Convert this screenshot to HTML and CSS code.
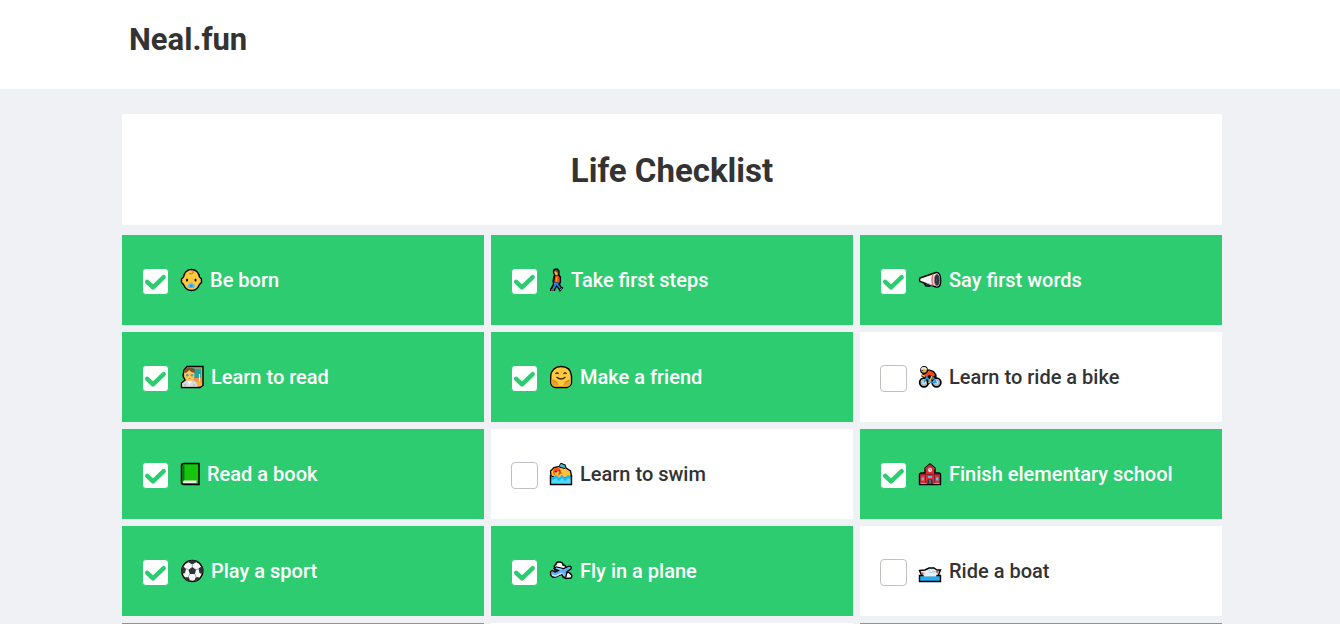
FILE: index.html
```
<!DOCTYPE html>
<html lang="en">
	<head>
		<meta charset="UTF-8">
		<title>Life Checklist</title>
		<link rel="stylesheet" href="styles.css">
	</head>
	<body>
		<header class="header">
			<div class="wrap">
				<a class="logo" href="#">Neal.fun</a>
			</div>
		</header>
		<main class="wrap">
			<div class="title">
				<h1>Life Checklist</h1>
			</div>
			<ul class="list">
				<li class="item">
					<input type="checkbox" id="born" checked>
					<label for="born">
						<svg class="emoji" viewBox="0 0 23 24" width="23" height="24">
							<path d="M11.5 1.5C7 1.5 4 5 3.5 9L1.5 11V14.5L3.5 16.500C5 20 8 22.500 11.500 22.500S18 20 19.500 16.500L21.500 14.500V11L19.500 9C19 5 16 1.500 11.500 1.500Z" fill="#ffc83d" stroke="#000" stroke-width="1.4"/>
							<path d="M9.500 2.500C13 2 14 4 12.500 5.500Q10 6.500 9.500 5" fill="none" stroke="#c27d27" stroke-width="1.2"/>
							<ellipse cx="7" cy="12" rx="1" ry="1.600"/><ellipse cx="15.500" cy="12" rx="1" ry="1.600"/>
							<rect x="7.500" y="16" width="7.500" height="4" rx="1.800" fill="#55c4f3"/>
							<circle cx="11.300" cy="18" r="1.400" fill="#2695df"/>
							<path d="M9.500 15H13" stroke="#f58363"/>
						</svg>
						<span>Be born</span>
					</label>
				</li>
				<li class="item">
					<input type="checkbox" id="steps" checked>
					<label for="steps">
						<svg class="emoji" viewBox="0 0 15 24" width="15" height="24">
							<path d="M4.500 2L6 1H8.500L10 3V7L11.500 9V14L10.500 16L12 19L13.500 20L11 23L8.500 19L7.500 18L5.500 22.500H1.500L2 20.500L4.500 16L4 13L5 8L6 7L4.500 5Z" stroke="#000" stroke-width="1.200"/>
							<path d="M5.300 3.500L7 2L9.200 3.500L8.700 7H6.500L5.300 5Z" fill="#f3b03c"/>
							<path d="M5.500 2.500L7 1.500L9.300 3V6L8 4.500Z" fill="#794523"/>
							<path d="M6.300 7.500H9.200L10.700 10V14.500H5.200Z" fill="#f24c19"/>
							<path d="M7.500 9.500V13.500" stroke="#ff9b25" stroke-width="1.200"/>
							<path d="M5 14.500H10L9.300 16.500L12 20L11 21L7.500 17L4.800 21.500H2.800L5 17Z" fill="#1685e4"/>
							<path d="M2 22H5M11 22L13 20.500" stroke="#ef8a2c"/>
						</svg>
						<span>Take first steps</span>
					</label>
				</li>
				<li class="item">
					<input type="checkbox" id="words" checked>
					<label for="words">
						<svg class="emoji" viewBox="0 0 24 24" width="24" height="24">
							<path d="M6 15L8 18H12L13 16" fill="none" stroke="#000" stroke-width="1.500"/>
							<path d="M2 10L18 4.500Q22.500 4 22.700 12T18 19L2 13.500Q1 12 2 10Z" fill="#f4f4f5" stroke="#000" stroke-width="1.400"/>
							<path d="M4 13.300L13 16L15 18L11 16.500Z" fill="#bec5ce"/>
							<path d="M15 6.500Q13 12 15.200 17.500" fill="none" stroke="#ee6566" stroke-width="1.400"/>
							<ellipse cx="19" cy="12" rx="2.800" ry="6" fill="#343438" stroke="#898995" stroke-width=".7"/>
							<path d="M18 10Q19.500 12 18 14Z" fill="#626270"/>
						</svg>
						<span>Say first words</span>
					</label>
				</li>
				<li class="item">
					<input type="checkbox" id="read" checked>
					<label for="read">
						<svg class="emoji" viewBox="0 0 24 24" width="24" height="24">
							<path d="M7 1.500H23V20.500L20 22.500H1.500V18L5 15L3 11L4 5Z" fill="#ef9653" stroke="#000" stroke-width="1.400"/>
							<path d="M12 3.500H21V13H12Z" fill="#1ca6a0"/>
							<path d="M12 3.500H14.500V13H12Z" fill="#087973"/>
							<path d="M2.300 21.800V18.500L6 15.500H14L17.500 18.500V21.800Z" fill="#d6dce2"/>
							<path d="M5 19V22M14 19V22" stroke="#a7aeb8"/>
							<path d="M7 15.500L9.500 20L12 15.500Z" fill="#fff"/>
							<path d="M4.500 7Q5 4 9.500 4Q14 4 14.500 8V12Q13 16 9.500 16Q5 15 4.500 11Z" fill="#ffc950"/>
							<path d="M3.800 8Q4 2.500 9.500 2.500Q14.500 2.500 15 8Q11.500 8 9 5Q7.500 8 3.800 8Z" fill="#80502c"/>
							<circle cx="7.300" cy="10.300" r="1.300" fill="#30a7dd"/><circle cx="12" cy="10.300" r="1.300" fill="#30a7dd"/>
							<path d="M8.500 13.500H11" stroke="#d48332" stroke-width=".8"/>
							<path d="M19.500 9V17" stroke="#fff" stroke-width="1.200"/>
							<path d="M16.500 18L19 15.500L21.500 17.500V21H17Z" fill="#ffb92e"/>
						</svg>
						<span>Learn to read</span>
					</label>
				</li>
				<li class="item">
					<input type="checkbox" id="friend" checked>
					<label for="friend">
						<svg class="emoji" viewBox="0 0 24 24" width="24" height="24">
							<path d="M12 1.500C6 1.500 2 5.500 1.700 11V18Q2 21 6 22.500H18Q22 21 22.500 18V11C22 5 18 1.500 12 1.500Z" fill="#ffc83d" stroke="#000" stroke-width="1.400"/>
							<path d="M2.500 14L8 16.500L10 20V21.700H6Q2.500 21 2.500 18ZM21.700 14L16 16.500L14 20V21.700H18Q21.700 21 21.700 18Z" fill="#e8a52a"/>
							<path d="M6.500 9Q8 6.500 9.500 9M14.500 9Q16 6.500 17.500 9M7.500 12Q12 16 16.500 12" fill="none" stroke="#3f2b19" stroke-width="1.300"/>
							<path d="M4 15L8 18M20 15L16 18" stroke="#c78118"/>
						</svg>
						<span>Make a friend</span>
					</label>
				</li>
				<li class="item">
					<input type="checkbox" id="bike">
					<label for="bike">
						<svg class="emoji" viewBox="0 0 24 24" width="24" height="24">
							<circle cx="6" cy="17.500" r="4.300" fill="#d6e1e8" stroke="#000" stroke-width="1.800"/>
							<circle cx="18.500" cy="17.500" r="4.300" fill="#d6e1e8" stroke="#000" stroke-width="1.800"/>
							<circle cx="6" cy="17.500" r="2.500" fill="none" stroke="#7b8b95" stroke-width=".7"/><circle cx="18.500" cy="17.500" r="2.500" fill="none" stroke="#7b8b95" stroke-width=".7"/>
							<path d="M8 6L11 5L15.500 6.500L18 10V13L14 12.500L13 17L10 19L8.500 14L4 11L4.500 9.500Z" stroke="#000" stroke-width="1.200"/>
							<path d="M8 7L11 5.500L15 7L17 10L16 11.500L11 10L8 12L6 10Z" fill="#f24b20"/>
							<path d="M8 12L13 16M6 17.500L9 12L12 17L18 17.500L15 12" fill="none" stroke="#2799ed" stroke-width="1.500"/>
							<path d="M4 10L7 11.500M14 11L12 16L10.500 18" fill="none" stroke="#f5b43a" stroke-width="1.600"/>
							<circle cx="6" cy="5" r="3.300" fill="#f3b343" stroke="#000" stroke-width="1.200"/>
							<path d="M2.800 5Q3 1.500 6 2Q9 2 9 5L6 4Z" fill="#e9e7d6"/>
							<circle cx="4.700" cy="5.500" r=".6"/>
						</svg>
						<span>Learn to ride a bike</span>
					</label>
				</li>
				<li class="item">
					<input type="checkbox" id="book" checked>
					<label for="book">
						<svg class="emoji" viewBox="0 0 20 24" width="20" height="24">
							<path d="M4 1.500H19V22.500H4Q1.500 22.500 1.500 20V4Q1.500 1.500 4 1.500Z" fill="#16c60c" stroke="#000" stroke-width="1.500"/>
							<path d="M2.300 4Q2.500 2.200 4.500 2.200V18L2.300 20Z" fill="#0b7515"/>
							<path d="M3 20Q3 18.500 4.500 18.500H16.500V21.500H4Q3 21.500 3 20Z" fill="#f2f2e8"/>
							<path d="M3 21.500H18" stroke="#13810c"/>
						</svg>
						<span>Read a book</span>
					</label>
				</li>
				<li class="item">
					<input type="checkbox" id="swim">
					<label for="swim">
						<svg class="emoji" viewBox="0 0 24 24" width="24" height="24">
							<path d="M2 14L1.500 9L5 5.500L10 4.500L12 1.500L16 3L17 6L21.500 9L22.500 14L12 17Z" fill="#ffbd38" stroke="#000" stroke-width="1.300"/>
							<path d="M10 4.500L12 2L15.500 3.500L16.500 6L12 5Z" fill="#32b9e7"/>
							<path d="M10 5L16 6.500" stroke="#000"/>
							<circle cx="8" cy="9.800" r="3.800" fill="#ef471e"/>
							<path d="M5.500 9.500H10L9 14H6Z" fill="#ffbd38"/>
							<path d="M5.500 9H8L7 11Z" fill="#24262b"/>
							<path d="M10 8L12.500 11.500" stroke="#9e3d16"/>
							<path d="M1.500 22.500V14L4 15.500L7 13L10 16L13 13L16 16L19 13L22.500 15V22.500Z" fill="#50d9ff"/>
							<path d="M2 14.500L4 15.500L7 13L10 16L13 13L16 16L19 13L22 15V18L19 16L16 19L13 16L10 19L7 16L4 18L2 17Z" fill="#20b6ec"/>
							<path d="M1.500 13V22.500H22.500V13" fill="none" stroke="#000" stroke-width="1.400"/>
						</svg>
						<span>Learn to swim</span>
					</label>
				</li>
				<li class="item">
					<input type="checkbox" id="school" checked>
					<label for="school">
						<svg class="emoji" viewBox="0 0 24 24" width="24" height="24">
							<path d="M1.500 22.500V12L3 11H7V6L12 2L17 6V11H21L22.500 12V22.500Z" fill="#dc2f34" stroke="#000" stroke-width="1.400"/>
							<path d="M7 7L12 3L17 7" fill="none" stroke="#9b3b3f" stroke-width="1.200"/>
							<circle cx="12" cy="8" r="2" fill="#f7e9ec"/>
							<path d="M12 6.700V8H13.300" fill="none" stroke="#ae6772" stroke-width=".8"/>
							<path d="M2.500 12.500H21.500" stroke="#8c1f29" stroke-width="1.300"/>
							<path d="M7.500 12V21M16.500 12V21" stroke="#8c1f29"/>
							<path d="M3.500 15.500H6V18.500H3.500ZM18 15.500H20.500V18.500H18ZM10 14H14V16H10Z" fill="#61b5ea"/>
							<path d="M9.500 17.500H14.500V22H9.500Z" fill="#303039"/>
							<path d="M12 18V21.500" stroke="#87a6b6"/>
							<path d="M2.500 21.500H8.500M15.500 21.500H21.500" stroke="#adb5b7" stroke-width=".8"/>
						</svg>
						<span>Finish elementary school</span>
					</label>
				</li>
				<li class="item">
					<input type="checkbox" id="sport" checked>
					<label for="sport">
						<svg class="emoji" viewBox="0 0 24 24" width="24" height="24">
							<circle cx="12.300" cy="12" r="10.500" fill="#f8f8f8" stroke="#000" stroke-width="1.500"/>
							<path d="M12.300 8L16 10.800L14.800 15H9.800L8.500 10.800Z" fill="#303236"/>
							<path d="M8 2.500L12.300 5L16.500 2.500Q12.300 .8 8 2.500ZM2.500 8L5.500 9.500L4.500 14L2 14ZM22 8L19 9.500L20 14L22.500 14ZM5 19L8.500 18.500L9.500 22Q6.500 21.500 5 19ZM19.500 19L16 18.500L15 22Q18 21.500 19.500 19Z" fill="#303236" stroke="#303236"/>
							<path d="M12.300 5V8M8.500 10.800L5.500 9.500M16 10.800L19 9.500M9.800 15L8 18.500M14.800 15L16.500 18.500" stroke="#a5a7ab"/>
						</svg>
						<span>Play a sport</span>
					</label>
				</li>
				<li class="item">
					<input type="checkbox" id="plane" checked>
					<label for="plane">
						<svg class="emoji" viewBox="0 0 24 24" width="24" height="24">
							<path d="M6 9Q4 7 7 5.500Q7 3 10 3Q14 3 14 6Q17 6 17 9L14 11H6Z" fill="#fff" stroke="#000" stroke-width="1.400"/>
							<path d="M14 18Q14 14.500 17 15Q19 12 21 14.500Q24 16 22 19L17 19.500Z" fill="#fff" stroke="#000" stroke-width="1.400"/>
							<path d="M1.500 12.500L3.500 11.500L6 13L9.500 11.500L5 9.500L7 8L14.500 9.500L20 7Q23 7 22 10L18 12.500L17 18L15 18.500L12.500 15.500L6 18.500Q2.500 18.500 1.500 15.500Z" fill="#67a9ed" stroke="#000" stroke-width="1.200"/>
							<path d="M3 16L7 17L13 14" fill="none" stroke="#c9e2f5" stroke-width="1.500"/>
							<path d="M7 9L13 10.500M13.500 14L15.500 17" stroke="#a8d4f8"/>
						</svg>
						<span>Fly in a plane</span>
					</label>
				</li>
				<li class="item">
					<input type="checkbox" id="boat">
					<label for="boat">
						<svg class="emoji" viewBox="0 0 24 24" width="24" height="24">
							<path d="M1.500 11.500L7 11L11 9H16L19 11H22.500L20 17H4Z" fill="#e8edf0" stroke="#000" stroke-width="1.400"/>
							<path d="M9 12L12 10.500H15.500L18 13L13 14Z" fill="#83d1e9"/>
							<path d="M12 10L14 13.500M8 12.500L17 11.500" stroke="#fff"/>
							<path d="M3 13L6.500 14V16.500H4ZM18 11.800L21 12L20 14.500L18 13.500Z" fill="#e65a55"/>
							<path d="M1.500 16.500H22.500V22.500H1.500Z" fill="#20aef0" stroke="#000" stroke-width="1.400"/>
							<path d="M5 14.500H19L18 17.500H6Z" fill="#e9eef2"/>
						</svg>
						<span>Ride a boat</span>
					</label>
				</li>
				<li class="item done"></li>
				<li class="item"></li>
				<li class="item done"></li>
			</ul>
		</main>
	</body>
</html>
```
FILE: styles.css
```
*{
	box-sizing: border-box;
	margin: 0;
	padding: 0;
}
body{
	height: 100vh;
	overflow: hidden;
	background: #f0f1f5;
	font-family: Roboto, sans-serif;
	color: #333;
}
.header{
	background: #fff;
	padding: 20px 0 29px;
	margin-bottom: 25px;
}
.wrap{
	max-width: 1104px;
	margin: 0 auto;
	padding-left: 4px;
}
.logo{
	display: block;
	padding-left: 7px;
	font-size: 31px;
	line-height: 40px;
	font-weight: bold;
	color: #333;
	text-decoration: none;
}
.title{
	background: #fff;
	padding: 37px 0 34px;
	margin-bottom: 10px;
	text-align: center;
}
.title h1{
	font-size: 33px;
	line-height: 40px;
}
.list{
	display: grid;
	grid-template-columns: repeat(3, 1fr);
	gap: 7px;
	list-style: none;
}
.item{
	display: flex;
	align-items: flex-start;
	min-height: 90px;
	padding: 33px 20px 30px;
	background: #fff;
}
.item.done, .item:has(input:checked){
	background: #2ecc71;
	color: #fff;
}
.item input{
	appearance: none;
	flex: none;
	width: 27px;
	height: 27px;
	margin-right: 11px;
	border: 1px solid #bdc1c5;
	border-radius: 4px;
	background: #fff;
}
.item input:checked{
	border-color: #2ecc71;
	background: #fff url("data:image/svg+xml,%3Csvg xmlns='http://www.w3.org/2000/svg' viewBox='0 0 25 25'%3E%3Cpath d='M4.200 12.800L10 18.300L20.700 8.200' fill='none' stroke='%232ecc71' stroke-width='4.500' stroke-linecap='round' stroke-linejoin='round'/%3E%3C/svg%3E") center / 25px 25px no-repeat;
}
.item label{
	display: flex;
	flex: 1;
	gap: 7px;
	font-size: 20px;
	line-height: 24px;
	font-weight: 500;
}
.emoji{
	flex: none;
}
```
